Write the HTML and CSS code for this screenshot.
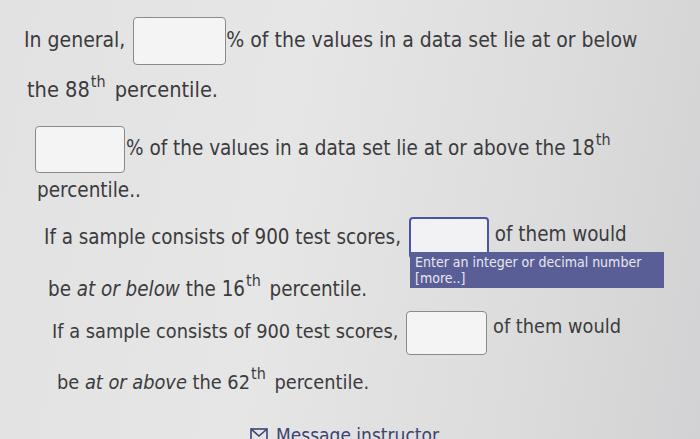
FILE: index.html
```html
<!DOCTYPE html>
<html>
<head>
<meta charset="utf-8">
<link rel="stylesheet" href="styles.css">
</head>
<body>
<div class="page">
  <div class="block b1">
    <div class="line l1">In general, <span class="box bx1"></span>% of the values in a data set lie at or below</div>
    <div class="line l2">the 88<sup>th</sup> percentile.</div>
  </div>
  <div class="block b2">
    <div class="line l3"><span class="box bx2"></span>% of the values in a data set lie at or above the 18<sup>th</sup></div>
    <div class="line l4">percentile..</div>
  </div>
  <div class="block b3">
    <div class="line l5">If a sample consists of 900 test scores, <span class="box bx3 active"></span><span class="up">of them would</span>
      <div class="tip">Enter an integer or decimal number<br>[more..]</div>
    </div>
    <div class="line l6">be <i>at or below</i> the 16<sup>th</sup> percentile.</div>
  </div>
  <div class="block b4">
    <div class="line l7">If a sample consists of 900 test scores, <span class="box bx4"></span><span class="up up2">of them would</span></div>
    <div class="line l8">be <i>at or above</i> the 62<sup>th</sup> percentile.</div>
  </div>
  <div class="footer">
    <svg class="env" width="18" height="14" viewBox="0 0 18 14"><rect x="1" y="1" width="16" height="12" fill="none" stroke="#3c4470" stroke-width="1.6"/><path d="M1 1 L9 8 L17 1" fill="none" stroke="#3c4470" stroke-width="1.6"/></svg>
    <span class="msg">Message instructor</span>
  </div>
</div>
</body>
</html>
```
FILE: styles.css
```css
html, body {
  margin: 0;
  padding: 0;
}
body {
  width: 700px;
  height: 439px;
  overflow: hidden;
  background: linear-gradient(100deg, #e2e2e2 0%, #e6e6e6 40%, #dcdcdc 75%, #d2d2d4 100%);
  font-family: "DejaVu Sans Condensed", "DejaVu Sans", sans-serif;
  color: #3b3b3d;
  font-size: 21px;
}
.page {
  position: relative;
  height: 439px;
}
.line {
  white-space: nowrap;
  position: relative;
}
sup {
  font-size: 16px;
  line-height: 0;
  vertical-align: 0;
  position: relative;
  top: -10px;
  margin-left: 1px;
  margin-right: 3px;
}
i {
  font-style: italic;
}
.up {
  position: relative;
  top: -3px;
}
.up2 { top: -5px; }
.box {
  display: inline-block;
  vertical-align: middle;
  background: #f4f4f4;
  border: 1.5px solid #8a8a8a;
  border-radius: 4px;
  box-sizing: border-box;
}
.b1 { padding: 16px 0 0 24px; }
.l1 { line-height: 48px; height: 48px; }
.bx1 { width: 93px; height: 48px; margin: 0 0 0 2px; }
.l2 { line-height: 30px; margin-top: 11px; padding-left: 3px; font-size: 21.6px; }
.b2 { padding: 20px 0 0 35px; font-size: 20.5px; }
.l3 { line-height: 47px; height: 47px; }
.bx2 { width: 90px; height: 47px; margin-right: 1px; }
.l4 { line-height: 30px; margin-top: 3px; padding-left: 2px; }
.b3 { padding: 11px 0 0 44px; font-size: 20.4px; }
.l5 { line-height: 42px; height: 42px; }
.bx3 { width: 80px; height: 42px; margin: 0 6px 0 2px; }
.bx3.active { border: 2px solid #4a55a8; background: #f2f2f4; }
.l6 { line-height: 30px; margin-top: 16px; padding-left: 4px; }
.tip {
  position: absolute;
  left: 366px;
  top: 36px;
  width: 244px;
  padding: 2px 5px;
  background: #5a5e96;
  color: #e8e8f0;
  font-size: 14px;
  line-height: 16px;
}
.b4 { padding: 6px 0 0 52px; font-size: 19.8px; }
.l7 { line-height: 44px; height: 44px; }
.bx4 { width: 81px; height: 44px; margin: 0 6px 0 2px; }
.l8 { line-height: 30px; margin-top: 14px; padding-left: 5px; }
.footer {
  position: absolute;
  left: 250px;
  top: 424px;
  display: flex;
  align-items: center;
  gap: 8px;
  color: #3c4470;
  font-size: 19px;
}
```
